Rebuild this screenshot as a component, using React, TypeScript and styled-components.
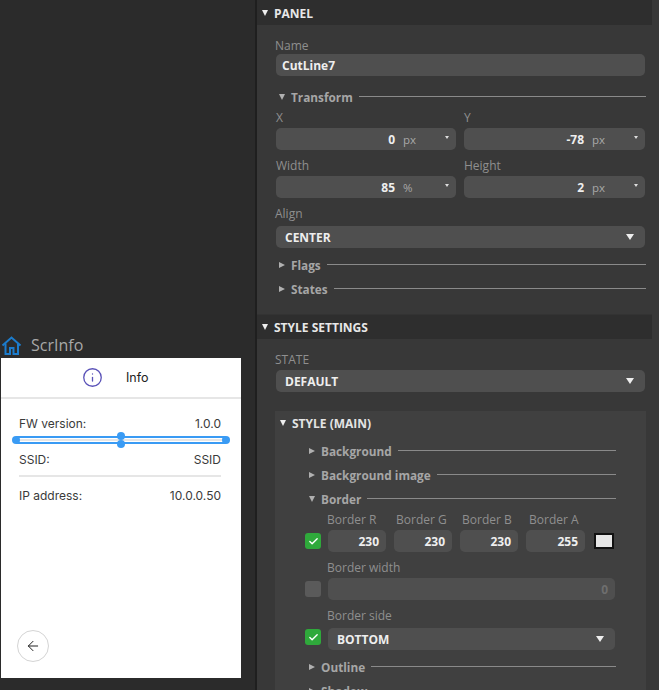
import React from "react";
import styled, { createGlobalStyle } from "styled-components";
import { ArrowLeft, Check, Info } from "lucide-react";

const Global = createGlobalStyle`
  html, body { margin: 0; padding: 0; background: #2b2b2b; }
  * { box-sizing: border-box; }
  #root { height: 690px; overflow: hidden; }
`;

const Page = styled.div`
  display: flex;
  width: 659px;
  height: 690px;
  overflow: hidden;
  background: #2b2b2b;
  font-family: "Open Sans", "Liberation Sans", sans-serif;
`;

/* ---------- left: canvas ---------- */
const Canvas = styled.div`
  width: 255px;
  flex: none;
  display: flex;
  flex-direction: column;
  justify-content: flex-end;
  padding: 0 0 12px 1px;
`;
const ScreenTitle = styled.div`
  display: flex;
  align-items: center;
  gap: 6px;
  height: 26px;
  color: #a8a8a8;
  font-size: 16px;
  svg { color: #1c7ccc; }
`;
const Screen = styled.div`
  position: relative;
  width: 240px;
  height: 320px;
  background: #fff;
  font-family: Inter, "Noto Sans", sans-serif;
  color: #3a3a3a;
  font-size: 12px;
`;
const ScreenHeader = styled.div`
  display: flex;
  align-items: center;
  height: 41px;
  padding-left: 81px;
  gap: 23px;
  border-bottom: 2px solid #e6e6e6;
  color: #222;
  font-size: 12.5px;
  svg { color: #5a52b8; }
`;
const InfoList = styled.div`
  display: flex;
  flex-direction: column;
  padding: 15px 20px 0 18px;
`;
const InfoRow = styled.div`
  display: flex;
  justify-content: space-between;
  align-items: center;
  height: 18px;
  font-size: 12px;
`;
const Separator = styled.div`
  height: 2px;
  margin: 7px 0 9px;
  background: #e6e6e6;
`;
const SelectedLine = styled.div`
  position: relative;
  height: 8px;
  margin: 4px -5px 6px -3px;
  border: solid #3a9bf4;
  border-width: 2px 0;
  background: linear-gradient(#e6e6e6, #e6e6e6) center / 100% 2px no-repeat #fff;
`;
const Handle = styled.span<{ $left: string; $top: number }>`
  position: absolute;
  left: ${(p) => p.$left};
  top: ${(p) => p.$top}px;
  width: 8px;
  height: 8px;
  margin-left: -4px;
  border-radius: 50%;
  background: #3a9bf4;
`;
const BackButton = styled.div`
  position: absolute;
  left: 16px;
  bottom: 16px;
  width: 32px;
  height: 32px;
  border: 1px solid #d4d4d4;
  border-radius: 50%;
  display: flex;
  align-items: center;
  justify-content: center;
  color: #222;
`;

/* ---------- right: inspector ---------- */
const Inspector = styled.div`
  width: 404px;
  flex: none;
  height: 690px;
  overflow: hidden;
  background: #383838;
  border-left: 2px solid #1f1f1f;
  padding-right: 7px;
`;
const SectionHeader = styled.div<{ $line?: boolean }>`
  display: flex;
  align-items: center;
  gap: 6px;
  height: 25px;
  padding-left: 5px;
  background: #2e2e2e;
  border-top: 1px solid ${(p) => (p.$line ? "#333" : "#2e2e2e")};
  color: #e8e8e8;
  font-size: 12px;
  font-weight: 700;
`;
const SectionBody = styled.div<{ $pb: number }>`
  padding: 13px 7px ${(p) => p.$pb}px 19px;
`;
const Caret = styled.span<{ $open?: boolean; $light?: boolean }>`
  flex: none;
  width: 0;
  height: 0;
  ${(p) =>
    p.$open
      ? `border-left: 3.5px solid transparent; border-right: 3.5px solid transparent; border-top: 6px solid ${p.$light ? "#eee" : "#b0b0b0"};`
      : `border-top: 3.5px solid transparent; border-bottom: 3.5px solid transparent; border-left: 6px solid ${p.$light ? "#eee" : "#b0b0b0"};`}
`;
const Label = styled.div<{ $mt?: number; $mb?: number; $ml?: number }>`
  height: 14px;
  line-height: 16px;
  margin: ${(p) => p.$mt ?? 0}px 0 ${(p) => p.$mb ?? 4}px ${(p) => p.$ml ?? -1}px;
  color: #8f8f8f;
  font-size: 12px;
  white-space: nowrap;
`;
const Fold = styled.div<{ $mt?: number; $ml?: number; $mr?: number }>`
  display: flex;
  align-items: center;
  height: 14px;
  gap: 6px;
  margin: ${(p) => p.$mt ?? 10}px ${(p) => p.$mr ?? -1}px 0 ${(p) => p.$ml ?? 3}px;
  color: #a6a6a6;
  font-size: 11.8px;
  font-weight: 700;
  white-space: nowrap;
  &::after {
    content: "";
    flex: 1;
    height: 1px;
    margin-top: -1px;
    background: #8a8a8a;
  }
`;
const TextInput = styled.div`
  height: 22px;
  display: flex;
  align-items: center;
  padding-left: 6px;
  background: #4f4f4f;
  border-radius: 5px;
  color: #eee;
  font-size: 12px;
  font-weight: 700;
`;
const Grid2 = styled.div`
  display: grid;
  grid-template-columns: 180px 181px;
  gap: 0 8px;
`;
const Cell = styled.div<{ $mt?: number }>`
  margin-top: ${(p) => p.$mt ?? 0}px;
  & > div:first-child { margin-left: 0; }
`;
const UnitInput = styled.div`
  height: 22px;
  display: grid;
  grid-template-columns: 1fr 38px 12px;
  align-items: center;
  background: #4f4f4f;
  border-radius: 5px;
  color: #eee;
  font-size: 12px;
  font-weight: 700;
  padding-right: 3px;
`;
const Value = styled.span`
  text-align: right;
  padding-right: 8px;
`;
const Unit = styled.span`
  color: #a8a8a8;
  font-size: 11.5px;
  font-weight: 400;
`;
const Tiny = styled.span`
  justify-self: center;
  margin-top: -3px;
  width: 0;
  height: 0;
  border-left: 2px solid transparent;
  border-right: 2px solid transparent;
  border-top: 3px solid #ddd;
`;
const Select = styled.div`
  height: 22px;
  display: flex;
  align-items: center;
  justify-content: space-between;
  padding: 0 11px 0 9px;
  background: #4f4f4f;
  border-radius: 5px;
  color: #eee;
  font-size: 12px;
  font-weight: 700;
`;
const StyleBox = styled.div`
  margin: 19px 0 0 -1px;
  padding: 5px 30px 0;
  background: #404040;
  width: 371px;
  height: 400px;
`;
const StyleTitle = styled.div`
  display: flex;
  align-items: center;
  gap: 6px;
  height: 14px;
  margin-left: -25px;
  color: #e4e4e4;
  font-size: 12px;
  font-weight: 700;
`;
const FieldRow = styled.div`
  display: grid;
  grid-template-columns: 16px 1fr;
  column-gap: 7px;
  align-items: center;
  margin-right: 1px;
`;
const CheckBox = styled.div<{ $on?: boolean; $up?: boolean }>`
  width: 16px;
  height: 16px;
  border-radius: 3px;
  display: flex;
  align-items: center;
  justify-content: center;
  background: ${(p) => (p.$on ? "#2fa93b" : "#5a5a5a")};
  color: #fff;
  ${(p) => p.$up && "align-self: start; margin-top: 1px;"}
`;
const RgbaGrid = styled.div`
  display: grid;
  grid-template-columns: 58px 58px 58px 59px 20px;
  column-gap: 8px;
  align-items: center;
`;
const NumberBox = styled.div<{ $disabled?: boolean }>`
  height: 22px;
  display: flex;
  align-items: center;
  justify-content: flex-end;
  padding-right: 7px;
  background: #4f4f4f;
  border-radius: 5px;
  color: ${(p) => (p.$disabled ? "#6e6e6e" : "#eee")};
  font-size: 12px;
  font-weight: 700;
`;
const Swatch = styled.div`
  width: 20px;
  height: 16px;
  margin-left: 1px;
  background: #e6e6e6;
  border: 2px solid #111;
`;
const LabelGrid = styled.div`
  display: grid;
  grid-template-columns: 69px 66px 67px 60px;
  margin: 6px 0 4px 22px;
`;
const LabelCell = styled.div`
  height: 14px;
  line-height: 16px;
  color: #8f8f8f;
  font-size: 12px;
  white-space: nowrap;
`;

const Triangle = () => (
  <svg width="8" height="6" viewBox="0 0 8 6">
    <path d="M0 0h8L4 6z" fill="#eee" />
  </svg>
);

const HomeIcon = () => (
  <svg width="24" height="24" viewBox="0 0 24 24" fill="none" stroke="currentColor" strokeWidth="2">
    <path d="M1.5 12.5 10.5 4.5l9 8" strokeLinejoin="miter" />
    <path d="M4.5 10.5V21H9v-6h3.5v6H17V10.5" />
  </svg>
);

const Unitted = ({ v, u }: { v: string; u: string }) => (
  <UnitInput>
    <Value>{v}</Value>
    <Unit>{u}</Unit>
    <Tiny />
  </UnitInput>
);

export default function App() {
  return (
    <Page>
      <Global />
      <Canvas>
        <ScreenTitle>
          <HomeIcon />
          ScrInfo
        </ScreenTitle>
        <Screen>
          <ScreenHeader>
            <Info size={21} strokeWidth={1.5} />
            Info
          </ScreenHeader>
          <InfoList>
            <InfoRow>
              <span>FW version:</span>
              <span>1.0.0</span>
            </InfoRow>
            <SelectedLine>
              <Handle $left="0px" $top={-2} />
              <Handle $left="50%" $top={-6} />
              <Handle $left="50%" $top={2} />
              <Handle $left="100%" $top={-2} />
            </SelectedLine>
            <InfoRow>
              <span>SSID:</span>
              <span>SSID</span>
            </InfoRow>
            <Separator />
            <InfoRow>
              <span>IP address:</span>
              <span>10.0.0.50</span>
            </InfoRow>
          </InfoList>
          <BackButton>
            <ArrowLeft size={16} strokeWidth={1.5} />
          </BackButton>
        </Screen>
      </Canvas>
      <Inspector>
        <SectionHeader>
          <Caret $open $light />
          PANEL
        </SectionHeader>
        <SectionBody $pb={18}>
          <Label $mb={2}>Name</Label>
          <TextInput>CutLine7</TextInput>
          <Fold $mt={14}>
            <Caret $open />
            Transform
          </Fold>
          <Grid2>
            <Cell $mt={6}>
              <Label>X</Label>
              <Unitted v="0" u="px" />
            </Cell>
            <Cell $mt={6}>
              <Label>Y</Label>
              <Unitted v="-78" u="px" />
            </Cell>
            <Cell $mt={8}>
              <Label>Width</Label>
              <Unitted v="85" u="%" />
            </Cell>
            <Cell $mt={8}>
              <Label>Height</Label>
              <Unitted v="2" u="px" />
            </Cell>
          </Grid2>
          <Label $mt={8} $mb={6}>Align</Label>
          <Select>
            CENTER
            <Triangle />
          </Select>
          <Fold>
            <Caret />
            Flags
          </Fold>
          <Fold>
            <Caret />
            States
          </Fold>
        </SectionBody>
        <SectionHeader $line>
          <Caret $open $light />
          STYLE SETTINGS
        </SectionHeader>
        <SectionBody $pb={0}>
          <Label>STATE</Label>
          <Select>
            DEFAULT
            <Triangle />
          </Select>
          <StyleBox>
            <StyleTitle>
              <Caret $open $light />
              STYLE (MAIN)
            </StyleTitle>
            <Fold $mt={14} $ml={4} $mr={0}>
              <Caret />
              Background
            </Fold>
            <Fold $ml={4} $mr={0}>
              <Caret />
              Background image
            </Fold>
            <Fold $ml={4} $mr={0}>
              <Caret $open />
              Border
            </Fold>
            <LabelGrid>
              <LabelCell>Border R</LabelCell>
              <LabelCell>Border G</LabelCell>
              <LabelCell>Border B</LabelCell>
              <LabelCell>Border A</LabelCell>
            </LabelGrid>
            <FieldRow>
              <CheckBox $on>
                <Check size={11} strokeWidth={3} />
              </CheckBox>
              <RgbaGrid>
                <NumberBox>230</NumberBox>
                <NumberBox>230</NumberBox>
                <NumberBox>230</NumberBox>
                <NumberBox>255</NumberBox>
                <Swatch />
              </RgbaGrid>
            </FieldRow>
            <Label $mt={8} $ml={22}>Border width</Label>
            <FieldRow>
              <CheckBox />
              <NumberBox $disabled>0</NumberBox>
            </FieldRow>
            <Label $mt={8} $mb={6} $ml={22}>Border side</Label>
            <FieldRow>
              <CheckBox $on $up>
                <Check size={11} strokeWidth={3} />
              </CheckBox>
              <Select>
                BOTTOM
                <Triangle />
              </Select>
            </FieldRow>
            <Fold $ml={4} $mr={0}>
              <Caret />
              Outline
            </Fold>
            <Fold $ml={4} $mr={0}>
              <Caret />
              Shadow
            </Fold>
          </StyleBox>
        </SectionBody>
      </Inspector>
    </Page>
  );
}
